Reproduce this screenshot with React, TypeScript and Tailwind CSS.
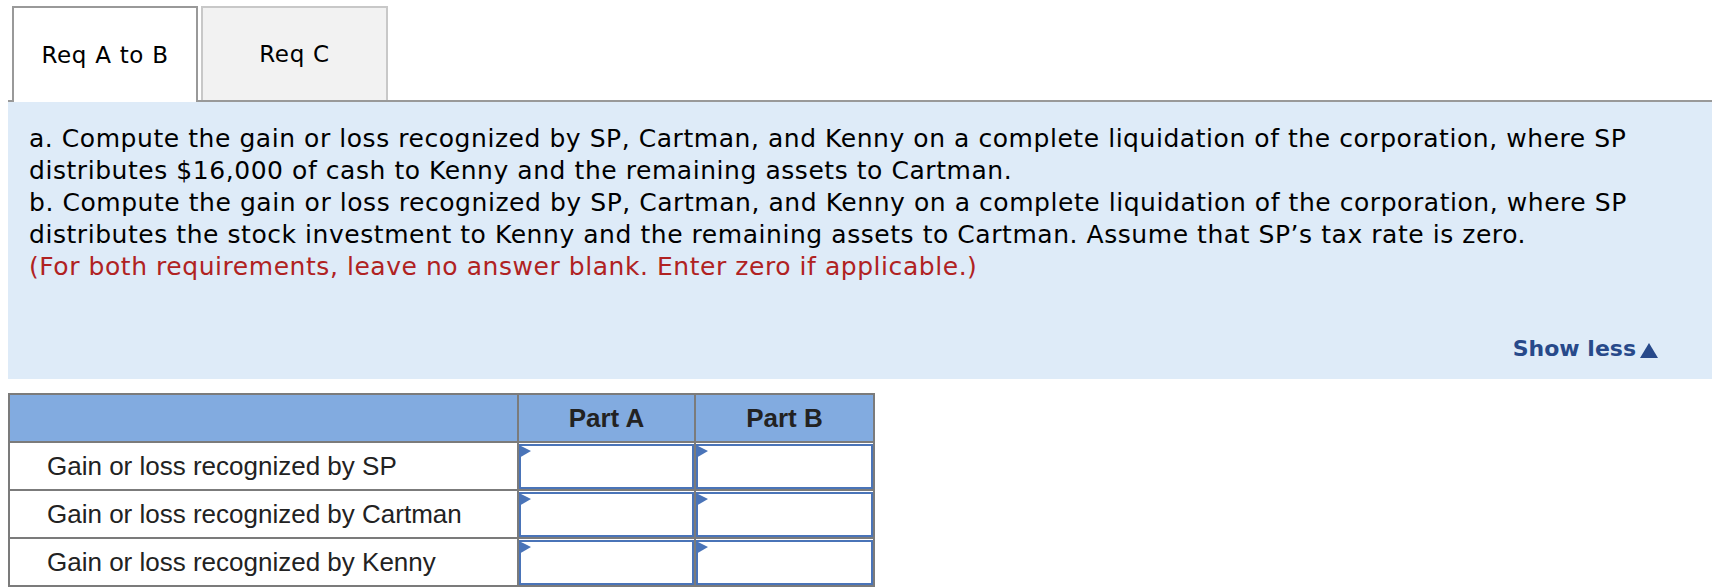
import React from 'react'

const rows = [
  'Gain or loss recognized by SP',
  'Gain or loss recognized by Cartman',
  'Gain or loss recognized by Kenny',
]

function AnswerCell() {
  return (
    <td className="relative border-2 border-[#7b7b7b] p-0 h-[48px] bg-white">
      <div className="relative h-[45px] border-2 border-[#4a74b8] bg-white">
        <svg className="absolute left-[-2px] top-[-1px]" width="12" height="14" viewBox="0 0 12 14">
          <polygon points="0,0 12,6 0,13" fill="#4a74b8" />
        </svg>
      </div>
    </td>
  )
}

export default function App() {
  return (
    <div className="w-[1712px] h-[588px] bg-white pt-[6px] overflow-hidden" style={{ fontFamily: '"DejaVu Sans", Verdana, sans-serif' }}>
      {/* Tabs */}
      <div className="ml-[8px] pl-[4px] flex items-end gap-[3px] border-b-2 border-[#999]">
        <div className="relative z-10 -mb-[2px] w-[186px] h-[96px] bg-white border-2 border-b-0 border-[#999] flex items-center justify-center text-[23px] tracking-[0.7px] text-black">
          Req A to B
        </div>
        <div className="w-[187px] h-[94px] bg-[#f2f2f2] border-2 border-b-0 border-[#c8c8c8] flex items-center justify-center text-[23px] tracking-[0.7px] text-black">
          Req C
        </div>
      </div>

      {/* Question panel */}
      <div className="ml-[8px] h-[277px] bg-[#deebf8] pl-[21px] pr-[54px] pt-[21px] pb-[14px] flex flex-col">
        <div className="text-[25px] leading-[32px] tracking-[0.55px] text-black whitespace-nowrap">
          <p>
            a. Compute the gain or loss recognized by SP, Cartman, and Kenny on a complete liquidation of the corporation, where SP
            <br />
            distributes $16,000 of cash to Kenny and the remaining assets to Cartman.
          </p>
          <p>
            b. Compute the gain or loss recognized by SP, Cartman, and Kenny on a complete liquidation of the corporation, where SP
            <br />
            distributes the stock investment to Kenny and the remaining assets to Cartman. Assume that SP’s tax rate is zero.
          </p>
          <p className="text-[#b02222]">(For both requirements, leave no answer blank. Enter zero if applicable.)</p>
        </div>
        <div className="mt-auto flex justify-end items-center text-[22px] leading-[32px] font-bold text-[#27498a]">
          <span>Show less</span>
          <svg className="ml-[4px] mt-[2px]" width="18" height="15" viewBox="0 0 18 15">
            <polygon points="9,0 18,15 0,15" fill="#27498a" />
          </svg>
        </div>
      </div>

      {/* Answer table */}
      <table
        className="mt-[14px] ml-[8px] border-collapse border-2 border-[#7b7b7b] text-[#222]"
        style={{ fontFamily: '"Liberation Sans", Arial, sans-serif' }}
      >
        <colgroup>
          <col className="w-[509px]" />
          <col className="w-[177px]" />
          <col className="w-[179px]" />
        </colgroup>
        <thead>
          <tr className="bg-[#82abe0] h-[48px]">
            <th className="border-2 border-[#7b7b7b]"></th>
            <th className="border-2 border-[#7b7b7b] text-[26px] font-bold text-center">Part A</th>
            <th className="border-2 border-[#7b7b7b] text-[26px] font-bold text-center">Part B</th>
          </tr>
        </thead>
        <tbody>
          {rows.map((label) => (
            <tr key={label} className="h-[48px]">
              <td className="border-2 border-[#7b7b7b] pl-[37px] text-[26px] text-left">{label}</td>
              <AnswerCell />
              <AnswerCell />
            </tr>
          ))}
        </tbody>
      </table>
    </div>
  )
}
